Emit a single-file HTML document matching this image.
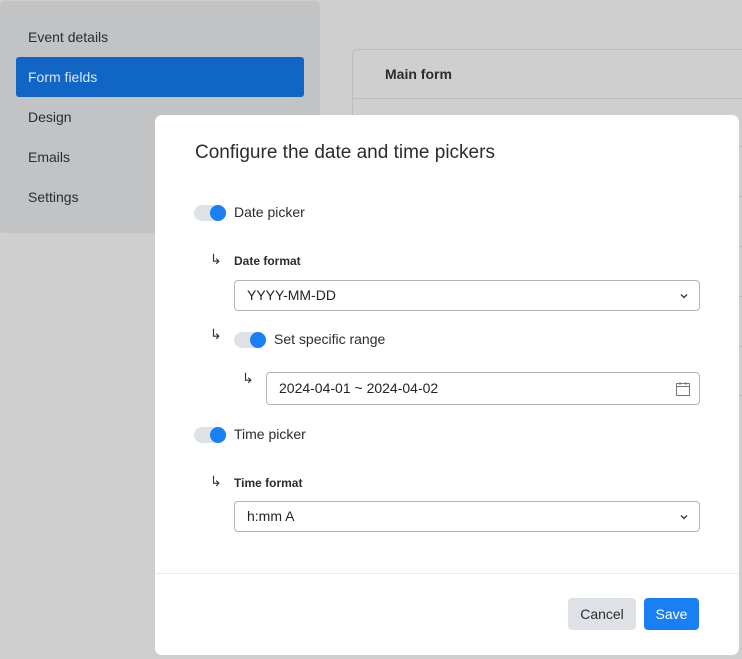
<!DOCTYPE html>
<html><head><meta charset="utf-8"><style>
*{box-sizing:border-box;margin:0;padding:0}
body{width:742px;height:659px;overflow:hidden;background:#cfcfcf;font-family:"Liberation Sans",sans-serif;color:#212529;position:relative}
.a{position:absolute}
.side{left:0;top:1px;width:320px;height:232px;background:#c2c3c5;border-radius:4px}
.nav{left:28px;font-size:14px;color:#2a2c2f}
.sel{left:16px;top:57px;width:288px;height:40px;background:#1166c5;border-radius:3px}
.card{left:352px;top:49px;width:400px;height:600px;border:1px solid #bdbdbd;border-radius:6px}
.modal{left:155px;top:115px;width:584px;height:540px;background:#fff;border-radius:7px}
.tg{width:32px;height:16px;border-radius:8px;background:#dee2e6}
.tg::after{content:"";position:absolute;right:0;top:0;width:16px;height:16px;border-radius:50%;background:#1a7ff5}
.lbl{font-size:14px;color:#2a2c2f}
.arr{font-size:14px;color:#333}
.inp{border:1px solid #adb5bd;border-radius:4px;height:31px;font-size:14px;padding:0 12px;line-height:29px;color:#212529}
.bold{font-size:12px;font-weight:bold;color:#2a2c2f}
.chev{position:absolute;right:10px;top:11px}
</style></head><body>
<div class="a side"></div>
<div class="a nav" style="top:29px">Event details</div>
<div class="a sel"></div>
<div class="a nav" style="top:69px;color:#dbe6f5">Form fields</div>
<div class="a nav" style="top:109px">Design</div>
<div class="a nav" style="top:149px">Emails</div>
<div class="a nav" style="top:189px">Settings</div>
<div class="a card"></div>
<div class="a" style="left:353px;top:98px;width:389px;height:1px;background:#bdbdbd"></div>
<div class="a" style="left:385px;top:66px;font-size:14px;font-weight:bold;color:#2a2c2f">Main form</div>
<div class="a" style="left:739px;top:146px;width:3px;height:1px;background:#b5b5b5"></div>
<div class="a" style="left:739px;top:196px;width:3px;height:1px;background:#b5b5b5"></div>
<div class="a" style="left:739px;top:246px;width:3px;height:1px;background:#b5b5b5"></div>
<div class="a" style="left:739px;top:296px;width:3px;height:1px;background:#b5b5b5"></div>
<div class="a" style="left:739px;top:346px;width:3px;height:1px;background:#b5b5b5"></div>
<div class="a" style="left:739px;top:395px;width:3px;height:1px;background:#b5b5b5"></div>

<div class="a modal"></div>
<div class="a" style="left:195px;top:142px;font-size:19px;color:#2a2c2f">Configure the date and time pickers</div>

<div class="a tg" style="left:194px;top:205px"></div>
<div class="a lbl" style="left:234px;top:204px">Date picker</div>

<div class="a arr" style="left:210px;top:251px">↳</div>
<div class="a bold" style="left:234px;top:254px">Date format</div>
<div class="a inp" style="left:234px;top:280px;width:466px">YYYY-MM-DD<svg class="chev" width="10" height="8" viewBox="0 0 10 8"><path d="M2 2.5l3 3 3-3" fill="none" stroke="#333" stroke-width="1.3"/></svg></div>

<div class="a arr" style="left:210px;top:326px">↳</div>
<div class="a tg" style="left:234px;top:332px"></div>
<div class="a lbl" style="left:274px;top:331px">Set specific range</div>

<div class="a arr" style="left:242px;top:370px">↳</div>
<div class="a inp" style="left:266px;top:372px;width:434px;height:33px;line-height:31px">2024-04-01 ~ 2024-04-02<svg class="a" style="right:8px;top:8px" width="16" height="16" viewBox="0 0 16 16"><rect x="1.5" y="2.5" width="13" height="12" fill="none" stroke="#777" stroke-width="1"/><path d="M1.5 5.5h13M5 1v3M11 1v3" stroke="#777" stroke-width="1"/></svg></div>

<div class="a tg" style="left:194px;top:427px"></div>
<div class="a lbl" style="left:234px;top:426px">Time picker</div>

<div class="a arr" style="left:210px;top:473px">↳</div>
<div class="a bold" style="left:234px;top:476px">Time format</div>
<div class="a inp" style="left:234px;top:501px;width:466px">h:mm A<svg class="chev" width="10" height="8" viewBox="0 0 10 8"><path d="M2 2.5l3 3 3-3" fill="none" stroke="#333" stroke-width="1.3"/></svg></div>

<div class="a" style="left:155px;top:573px;width:584px;height:1px;background:#e9ecef"></div>
<div class="a" style="left:568px;top:598px;width:68px;height:32px;background:#dee2e6;border-radius:4px;font-size:14px;line-height:32px;text-align:center;color:#2a2c2f">Cancel</div>
<div class="a" style="left:644px;top:598px;width:55px;height:32px;background:#1a7ff5;border-radius:4px;font-size:14px;line-height:32px;text-align:center;color:#fff">Save</div>
</body></html>
